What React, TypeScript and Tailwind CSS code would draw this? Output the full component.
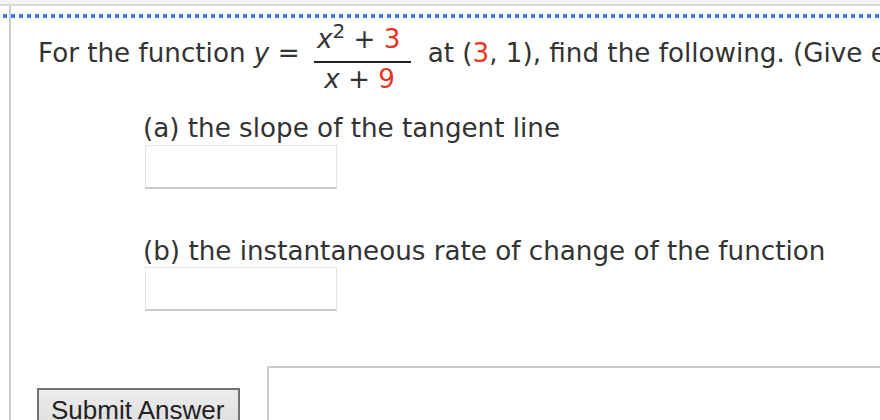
import React from "react";

const red = "text-[#e8351f]";

export default function App() {
  return (
    <div className="w-[880px] h-[420px] overflow-hidden bg-white text-[#333333] font-['DejaVu_Sans',Verdana,sans-serif]">
      <div className="h-[4px] bg-[#f4f4f4]" />
      <div className="h-[2px] bg-[#dadada]" />
      <div className="ml-[9px] border-l-2 border-[#cccccc] flex flex-col min-h-[414px]">
        <div className="shrink-0 mt-[8px] -ml-[8px] h-[4px] bg-[repeating-linear-gradient(90deg,#3c7ee6_0px,#3c7ee6_4px,transparent_4px,transparent_8px)]" />
        <div className="shrink-0 mt-[6px] ml-[27px] flex items-start text-[26.2px] leading-[30px] whitespace-nowrap">
          <span className="shrink-0 mt-[14px]">
            For the function <span className="italic">y</span> =
          </span>
          <span className="shrink-0 ml-[14px] flex flex-col items-center w-[97px]">
            <span className="h-[30px] pr-[7px]">
              <span className="italic">x</span>
              <span className="text-[20px] leading-[0] align-[10px]">2</span> + <span className={red}>3</span>
            </span>
            <span className="mt-[7px] h-[2px] w-full bg-[#222]" />
            <span className="mt-[1px] h-[30px] pr-[5px]">
              <span className="italic">x</span> + <span className={red}>9</span>
            </span>
          </span>
          <span className="shrink-0 mt-[14px] ml-[17px]">
            at (<span className={red}>3</span>, 1), find the following. (Give exact answers.)
          </span>
        </div>
        <div className="shrink-0 mt-[19px] ml-[132px] text-[26.2px] leading-[30px] whitespace-nowrap">
          (a) the slope of the tangent line
        </div>
        <div className="shrink-0 mt-[2px] ml-[134px] w-[192px] h-[44px] border border-[#e4e4e4] border-b-2 border-b-[#c8c8c8] bg-white" />
        <div className="shrink-0 mt-[47px] ml-[132px] text-[26.2px] leading-[30px] whitespace-nowrap">
          (b) the instantaneous rate of change of the function
        </div>
        <div className="shrink-0 mt-[1px] ml-[134px] w-[192px] h-[44px] border border-[#e4e4e4] border-b-2 border-b-[#c8c8c8] bg-white" />
        <div className="shrink-0 mt-[55px] flex items-start">
          <button className="shrink-0 mt-[22px] ml-[26px] w-[203px] h-[44px] border-2 border-[#727272] bg-[linear-gradient(#ececec,#dcdcdc)] pl-[12px] pt-0 text-left text-[26px] leading-[30px] text-[#222] font-['Liberation_Sans',Arial,sans-serif] whitespace-nowrap">
            Submit Answer
          </button>
          <div className="ml-[27px] flex-1 h-[80px] border-t-2 border-l-2 border-[#cccccc]" />
        </div>
      </div>
    </div>
  );
}
